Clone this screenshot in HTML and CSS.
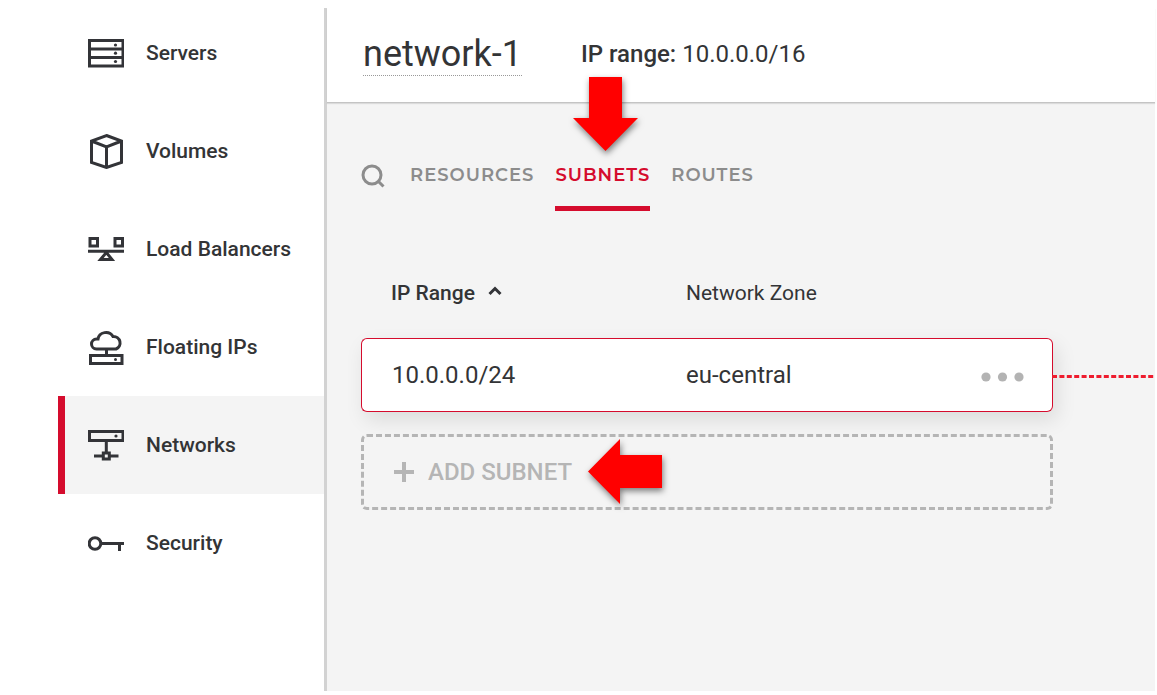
FILE: index.html
```html
<!DOCTYPE html>
<html lang="en">
<head>
    <meta charset="UTF-8">
    <meta name="viewport" content="width=device-width, initial-scale=1.0">
    <title>network-1</title>
    <link rel="stylesheet" href="styles.css">
</head>
<body>
    <nav class="sidebar">
        <a class="nav-item" href="#">
            <svg class="nav-icon" viewBox="0 0 36 36">
                <path d="M1.500 5.500h33.500v25.500H1.500zM1 14h34M1 22.500h34"/>
                <circle class="dot" cx="27.500" cy="10" r="1.600"/>
                <circle class="dot" cx="27.500" cy="18.200" r="1.600"/>
                <circle class="dot" cx="27.500" cy="26.500" r="1.600"/>
            </svg>
            Servers
        </a>
        <a class="nav-item" href="#">
            <svg class="nav-icon" viewBox="0 0 36 36">
                <path d="M18.500 2.500L33.500 8V29.500L18.500 34.500L3.500 29.500V8zM3.500 8L18.500 14L33.500 8M18.500 14V34"/>
            </svg>
            Volumes
        </a>
        <a class="nav-item" href="#">
            <svg class="nav-icon" viewBox="0 0 36 36">
                <path d="M2 7.500h7.500v7.500H2zM27 7.500h7.500v7.500H27zM0 20.200h36M18.300 21.500L24 28.500H12.500z"/>
            </svg>
            Load Balancers
        </a>
        <a class="nav-item" href="#">
            <svg class="nav-icon" viewBox="0 0 36 36">
                <path d="M8.500 20a5 5 0 0 1 0-10 h1.500a8 7.500 0 0 1 15 -2.500a6.500 6.500 0 0 1 3 12.500zM18.500 20v6M2.500 26.500h31.500v8H2.500z"/>
                <circle class="dot" cx="27.500" cy="30.500" r="1.500"/>
            </svg>
            Floating IPs
        </a>
        <a class="nav-item active" href="#">
            <svg class="nav-icon" viewBox="0 0 36 36">
                <path d="M1.500 4.500h33.500v9H1.500zM18.300 13.500v12M6 29h9M22 29h8.500M15.300 26h6v6h-6z"/>
                <circle class="dot" cx="28" cy="9" r="1.600"/>
            </svg>
            Networks
        </a>
        <a class="nav-item" href="#">
            <svg class="nav-icon" viewBox="0 0 36 36">
                <circle cx="7" cy="18.500" r="5.800"/>
                <path d="M13 18.500h23M31.500 18.500v7.500"/>
            </svg>
            Security
        </a>
    </nav>

    <main class="main">
        <header class="header">
            <h1 class="name">network-1</h1>
            <p class="range"><b>IP range:</b> 10.0.0.0/16</p>
        </header>

        <div class="content">
            <div class="tabs">
                <button class="search" type="button" aria-label="Search">
                    <svg width="24" height="24" viewBox="0 0 24 24">
                        <circle cx="11" cy="11" r="9"/>
                        <path d="M17.500 17.500L22.500 22.500"/>
                    </svg>
                </button>
                <a class="tab" href="#">RESOURCES</a>
                <a class="tab active" href="#">SUBNETS</a>
                <a class="tab" href="#">ROUTES</a>
            </div>

            <table class="subnets">
                <thead>
                    <tr>
                        <th class="sorted">
                            IP Range
                            <svg class="caret" width="14" height="10" viewBox="0 0 14 10"><path d="M1.500 8L7 2.500L12.500 8"/></svg>
                        </th>
                        <th>Network Zone</th>
                        <th></th>
                    </tr>
                </thead>
                <tbody>
                    <tr>
                        <td>10.0.0.0/24</td>
                        <td>eu-central</td>
                        <td class="actions">
                            <button class="more" type="button" aria-label="More">
                                <svg width="44" height="10" viewBox="0 0 44 10"><circle cx="6" cy="5" r="4.600"/><circle cx="22.500" cy="5" r="4.600"/><circle cx="39" cy="5" r="4.600"/></svg>
                            </button>
                            <svg class="link-line" height="3"><line x1="0" y1="1.500" x2="100%" y2="1.500"/></svg>
                        </td>
                    </tr>
                </tbody>
            </table>

            <button class="add" type="button">
                <svg width="20" height="20" viewBox="0 0 20 20"><path d="M10 0v20M0 10h20"/></svg>
                ADD SUBNET
            </button>
        </div>
    </main>

    <!-- pointers -->
    <svg class="arrow arrow-down" width="65" height="74" viewBox="0 0 65 74"><path d="M16 0h33v41h16L32.500 74L0 41h16z"/></svg>
    <svg class="arrow arrow-left" width="74" height="65" viewBox="0 0 74 65"><path d="M0 32.500L32 0v16h42v33H32v16z"/></svg>
</body>
</html>
```
FILE: styles.css
```css
* {
    box-sizing: border-box;
}

body {
    display: flex;
    min-height: 100vh;
    margin: 0;
    padding: 4px 2px 4px 58px;
    background-color: #fff;
    color: #333436;
    font-family: Roboto, sans-serif;
    font-size: 20px;
}

button {
    padding: 0;
    border: 0;
    background: none;
    font-family: inherit;
    cursor: pointer;
}

svg {
    display: block;
    fill: none;
}

.sidebar {
    flex: 0 0 266px;
}

.nav-item {
    display: flex;
    align-items: center;
    gap: 22px;
    height: 98px;
    padding-left: 23px;
    border-left: 7px solid transparent;
    color: inherit;
    font-size: 21px;
    font-weight: 500;
    text-decoration: none;
}

.nav-item.active {
    border-left-color: #d50c2d;
    background-color: #f4f4f4;
}

.nav-icon {
    width: 36px;
    height: 36px;
    stroke: #333438;
    stroke-width: 3;
}

.nav-icon .dot {
    fill: #333438;
    stroke: none;
}

.main {
    flex: 1;
    margin-top: 4px;
    border-left: 3px solid #d2d2d2;
    background-color: #f4f4f4;
}

.header {
    display: flex;
    align-items: center;
    gap: 59px;
    height: 95px;
    padding: 0 36px 2px;
    border-bottom: 1px solid #c4c4c4;
    background-color: #fff;
    box-shadow: 0 1px 1px rgba(0, 0, 0, 0.1);
}

.name {
    margin: 0;
    border-bottom: 1px dotted #999;
    font-size: 36px;
    font-weight: 400;
    line-height: 42px;
}

.range {
    margin: 0;
    font-size: 24px;
}

.range b {
    font-weight: 500;
}

.content {
    padding: 51px 102px 0 34px;
}

.tabs {
    display: flex;
    align-items: flex-start;
    gap: 21px;
    height: 57px;
}

.search {
    margin-top: 10px;
    margin-right: 4px;
}

.search svg {
    stroke: #8c8c8c;
    stroke-width: 3;
}

.tab {
    height: 57px;
    color: #8c8c8c;
    font-family: Montserrat, Inter, sans-serif;
    font-size: 18px;
    font-weight: 600;
    letter-spacing: 1px;
    line-height: 42px;
    text-decoration: none;
}

.tab.active {
    border-bottom: 5px solid #d50c2d;
    color: #d50c2d;
}

.subnets {
    width: 100%;
    margin-top: 63px;
    border-spacing: 0;
    table-layout: fixed;
}

.subnets th {
    height: 64px;
    padding: 0 0 26px 30px;
    font-size: 21px;
    font-weight: 400;
    text-align: left;
}

.subnets th.sorted {
    font-weight: 500;
}

.subnets th:first-child {
    width: 295px;
}

.caret {
    display: inline-block;
    margin-left: 8px;
    vertical-align: 4px;
    stroke: #333438;
    stroke-width: 3;
}

.subnets tbody tr {
    border-radius: 6px;
    box-shadow: 4px 8px 20px rgba(0, 20, 10, 0.1);
}

.subnets td {
    height: 74px;
    padding: 0 0 0 30px;
    border: solid #d50c2d;
    border-width: 1px 0;
    background-color: #fff;
    font-size: 24px;
}

.subnets td:first-child {
    border-left-width: 1px;
    border-radius: 6px 0 0 6px;
}

.subnets td:last-child {
    border-right-width: 1px;
    border-radius: 0 6px 6px 0;
}

.actions {
    position: relative;
}

.more {
    display: block;
    margin: 4px 28px 0 auto;
}

.more svg {
    fill: #b3b3b3;
}

.link-line {
    position: absolute;
    top: 36px;
    left: 100%;
    width: 102px;
    stroke: #ee1c2e;
    stroke-width: 3;
    stroke-dasharray: 5 2.4;
}

.add {
    display: flex;
    align-items: center;
    gap: 14px;
    width: 100%;
    height: 76px;
    margin-top: 22px;
    padding-left: 30px;
    border: 3px dashed #b5b5b5;
    border-radius: 6px;
    color: #b5b5b5;
    font-size: 24px;
    font-weight: 500;
}

.add svg {
    stroke: #b5b5b5;
    stroke-width: 4;
}

.arrow {
    position: absolute;
    overflow: visible;
    fill: #f00;
    filter: drop-shadow(1px 3px 3px rgba(0, 0, 0, 0.5));
}

.arrow-down {
    top: 77px;
    left: 573px;
}

.arrow-left {
    top: 439px;
    left: 588px;
}
```
